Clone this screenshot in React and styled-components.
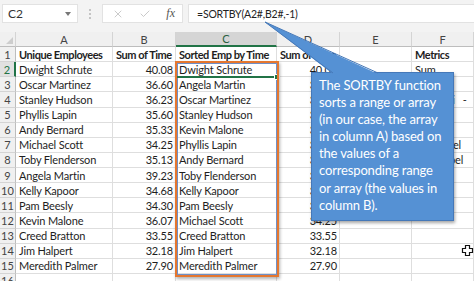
import React from 'react'
import styled, { createGlobalStyle } from 'styled-components'
import { X, Check } from 'lucide-react'

const GlobalStyle = createGlobalStyle`
  html, body {
    margin: 0;
    padding: 0;
    background: #fff;
    overflow: hidden;
  }
  body {
    font-family: Lato, 'Open Sans', sans-serif;
  }
`

const rows = [
  ['Dwight Schrute', '40.08', 'Dwight Schrute', '40.08', 'Sum'],
  ['Oscar Martinez', '36.60', 'Angela Martin', '39.23', 'Average'],
  ['Stanley Hudson', '36.23', 'Oscar Martinez', '36.60', 'Std Devi\u00a0\u00a0\u00a0-'],
  ['Phyllis Lapin', '35.60', 'Stanley Hudson', '36.23', 'Count'],
  ['Andy Bernard', '35.33', 'Kevin Malone', '36.07', 'Max'],
  ['Michael Scott', '34.25', 'Phyllis Lapin', '35.60', 'Min Label'],
  ['Toby Flenderson', '35.13', 'Andy Bernard', '35.33', 'Max Label'],
  ['Angela Martin', '39.23', 'Toby Flenderson', '35.13', ''],
  ['Kelly Kapoor', '34.68', 'Kelly Kapoor', '34.68', ''],
  ['Pam Beesly', '34.30', 'Pam Beesly', '34.30', ''],
  ['Kevin Malone', '36.07', 'Michael Scott', '34.25', ''],
  ['Creed Bratton', '33.55', 'Creed Bratton', '33.55', ''],
  ['Jim Halpert', '32.18', 'Jim Halpert', '32.18', ''],
  ['Meredith Palmer', '27.90', 'Meredith Palmer', '27.90', ''],
]

const Window = styled.div`
  position: relative;
  width: 474px;
  height: 281px;
  overflow: hidden;
  background: #fff;
`

const FormulaBar = styled.div`
  display: flex;
  align-items: center;
  height: 32px;
  padding: 4px 0 9px 2px;
  box-sizing: border-box;
  background: #f3f3f3;
`

const NameBox = styled.div`
  display: flex;
  align-items: center;
  justify-content: space-between;
  box-sizing: border-box;
  width: 76px;
  height: 19px;
  padding: 0 6px 0 5px;
  background: #fff;
  border: 1px solid #e2e2e2;
  font-size: 12px;
  color: #333;
`

const Caret = styled.span`
  width: 0;
  height: 0;
  border-left: 3px solid transparent;
  border-right: 3px solid transparent;
  border-top: 4px solid #777;
`

const Grip = styled.div`
  display: flex;
  flex-direction: column;
  align-items: center;
  justify-content: center;
  gap: 2px;
  width: 24px;
  height: 19px;
  span {
    width: 2px;
    height: 2px;
    background: #c4c4c4;
  }
`

const FxBox = styled.div`
  display: flex;
  align-items: center;
  justify-content: space-between;
  box-sizing: border-box;
  width: 81px;
  height: 19px;
  padding: 0 7px 0 9px;
  margin-right: 5px;
  background: #fff;
  border: 1px solid #e2e2e2;
  color: #b8b8b8;
`

const Fx = styled.span`
  font-family: 'Liberation Serif', serif;
  font-style: italic;
  font-size: 12px;
  color: #555;
`

const FormulaInput = styled.div`
  flex: 1;
  display: flex;
  align-items: center;
  box-sizing: border-box;
  height: 19px;
  padding-left: 8px;
  background: #fff;
  border: 1px solid #e2e2e2;
  border-right: none;
  font-size: 10.5px;
  letter-spacing: -0.2px;
  color: #222;
`

const Sheet = styled.div`
  display: grid;
  grid-template-columns: 16px 97px 63px 101px 63px 72px 1fr;
  grid-template-rows: 15px repeat(16, 15.14px);
  font-size: 11px;
  color: #1e1e1e;
`

const Corner = styled.div`
  position: relative;
  background: #f0f0f0;
  border-right: 1px solid #d4d4d4;
  border-bottom: 1px solid #bdbdbd;
  box-sizing: border-box;
  &::after {
    content: '';
    position: absolute;
    right: 2px;
    bottom: 2px;
    border-left: 7px solid transparent;
    border-bottom: 7px solid #cdcdcd;
  }
`

const ColHead = styled.div`
  display: flex;
  align-items: center;
  justify-content: center;
  box-sizing: border-box;
  background: ${(p) => (p.$active ? '#d5d5d5' : '#f0f0f0')};
  border-right: 1px solid #d4d4d4;
  border-bottom: ${(p) => (p.$active ? '2px solid #217346' : '1px solid #bdbdbd')};
  color: ${(p) => (p.$active ? '#2a5f3f' : '#444')};
  font-size: 11px;
`

const RowHead = styled.div`
  display: flex;
  align-items: center;
  justify-content: center;
  box-sizing: border-box;
  background: ${(p) => (p.$active ? '#e1e1e1' : '#f0f0f0')};
  border-right: ${(p) => (p.$active ? '2px solid #217346' : '1px solid #bdbdbd')};
  border-bottom: 1px solid #d4d4d4;
  color: ${(p) => (p.$active ? '#217346' : '#444')};
  font-size: 11px;
`

const Cell = styled.div`
  display: flex;
  align-items: center;
  justify-content: ${(p) => (p.$num ? 'flex-end' : 'flex-start')};
  box-sizing: border-box;
  padding: 0 2px 0 3px;
  border-right: 1px solid #dedede;
  border-bottom: 1px solid #dedede;
  white-space: nowrap;
  font-weight: ${(p) => (p.$bold ? 700 : 400)};
  letter-spacing: ${(p) => (p.$bold ? '-0.45px' : '-0.15px')};
  min-width: 0;
`

const OrangeFrame = styled.div`
  position: absolute;
  left: 175px;
  top: 61px;
  width: 104px;
  height: 216px;
  box-sizing: border-box;
  border: 2px solid #e5772f;
  box-shadow: 1px 2px 3px rgba(0, 0, 0, 0.3);
`

const SpillFrame = styled.div`
  position: absolute;
  left: 177px;
  top: 63px;
  width: 100px;
  height: 212px;
  box-sizing: border-box;
  border: 1px solid #6f8fc6;
`

const ActiveCell = styled.div`
  position: absolute;
  left: 177px;
  top: 62px;
  width: 100px;
  height: 16px;
  box-sizing: border-box;
  border-bottom: 2px solid #217346;
  &::after {
    content: '';
    position: absolute;
    right: -3px;
    bottom: -4px;
    width: 4px;
    height: 4px;
    background: #217346;
    border: 1px solid #fff;
  }
`

const Callout = styled.div`
  position: absolute;
  left: 311px;
  top: 72px;
  width: 143px;
  height: 149px;
  box-sizing: border-box;
  padding: 4px 0 0 7px;
  background: #5591d4;
  border: 1px solid #4578b8;
  box-shadow: 1px 2px 3px rgba(0, 0, 0, 0.35);
  color: #fff;
  font-size: 13px;
  letter-spacing: -0.15px;
  line-height: 17.1px;
  white-space: nowrap;
`

const Overlay = styled.svg`
  position: absolute;
  left: 0;
  top: 0;
  pointer-events: none;
`

const calloutLines = [
  'The SORTBY function',
  'sorts a range or array',
  '(in our case, the array',
  'in column A) based on',
  'the values of a',
  'corresponding range',
  'or array (the values in',
  'column B).',
]

const letters = ['A', 'B', 'C', 'D', 'E', 'F']

export default function App() {
  return (
    <Window>
      <GlobalStyle />
      <FormulaBar>
        <NameBox>
          C2
          <Caret />
        </NameBox>
        <Grip>
          <span />
          <span />
          <span />
        </Grip>
        <FxBox>
          <X size={12} strokeWidth={1.5} />
          <Check size={12} strokeWidth={1.5} />
          <Fx>fx</Fx>
        </FxBox>
        <FormulaInput>=SORTBY(A2#,B2#,-1)</FormulaInput>
      </FormulaBar>

      <Sheet>
        <Corner />
        {letters.map((l) => (
          <ColHead key={l} $active={l === 'C'}>
            {l}
          </ColHead>
        ))}

        <RowHead>1</RowHead>
        <Cell $bold>Unique Employees</Cell>
        <Cell $bold>Sum of Time</Cell>
        <Cell $bold>Sorted Emp by Time</Cell>
        <Cell $bold>Sum of Time</Cell>
        <Cell />
        <Cell $bold>Metrics</Cell>

        {rows.map((r, i) => (
          <React.Fragment key={i}>
            <RowHead $active={i === 0}>{i + 2}</RowHead>
            <Cell>{r[0]}</Cell>
            <Cell $num>{r[1]}</Cell>
            <Cell>{r[2]}</Cell>
            <Cell $num>{r[3]}</Cell>
            <Cell />
            <Cell>{r[4]}</Cell>
          </React.Fragment>
        ))}

        <RowHead>16</RowHead>
        <Cell />
        <Cell />
        <Cell />
        <Cell />
        <Cell />
        <Cell />
      </Sheet>

      <SpillFrame />
      <ActiveCell />
      <OrangeFrame />

      <Callout>
        {calloutLines.map((t, i) => (
          <div key={i}>{t}</div>
        ))}
      </Callout>

      <Overlay width="474" height="281" viewBox="0 0 474 281">
        <polygon points="265,22 333,74 378,74" fill="#5591d4" />
        <polyline points="333,73 265,22 378,73" fill="none" stroke="#4578b8" strokeWidth="1" />
        <g transform="translate(462 245)">
          <polygon
            points="3.5,0.5 7.5,0.5 7.5,3.5 10.5,3.5 10.5,7.5 7.5,7.5 7.5,10.5 3.5,10.5 3.5,7.5 0.5,7.5 0.5,3.5 3.5,3.5"
            fill="#fff"
            stroke="#111"
            strokeWidth="1.2"
          />
        </g>
      </Overlay>
    </Window>
  )
}
